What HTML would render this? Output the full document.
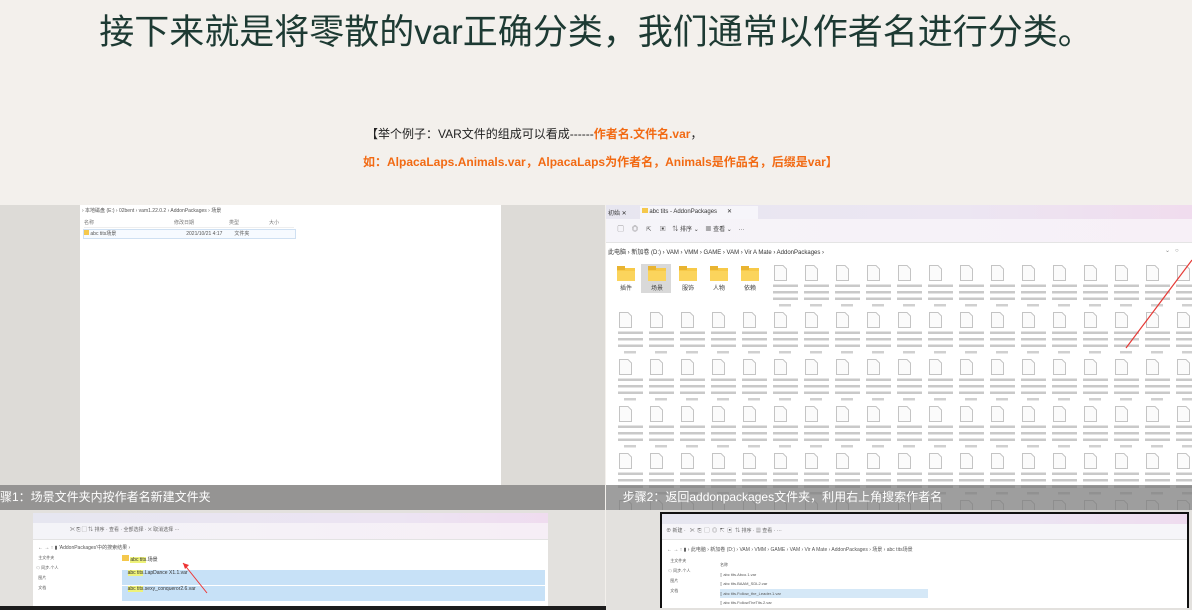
<!DOCTYPE html>
<html><head><meta charset="utf-8"><style>
html,body{margin:0;padding:0;}
body{width:1192px;height:610px;background:#f3f0ec;position:relative;overflow:hidden;font-family:"Liberation Sans","Noto Sans CJK SC",sans-serif;}
.abs{position:absolute;}
h1{position:absolute;left:0;width:1192px;top:4px;margin:0;text-align:center;font-weight:normal;font-size:35px;color:#1d3a33;font-family:"Liberation Sans","Noto Sans CJK SC",sans-serif;letter-spacing:0px;}
.l1{left:366px;top:125px;font-size:12px;color:#222;}
.l2{left:363px;top:153px;font-size:12px;color:#f26a13;font-weight:bold;}
.or{color:#f26a13;font-weight:bold;}
.cap{position:absolute;height:25px;background:rgba(120,120,120,.72);color:#fff;font-size:12px;line-height:25px;}
</style></head><body>
<h1>接下来就是将零散的var正确分类，我们通常以作者名进行分类。</h1>
<div class="abs l1">【举个例子：VAR文件的组成可以看成------<span class="or">作者名.文件名.var</span>，</div>
<div class="abs l2">如：AlpacaLaps.Animals.var，AlpacaLaps为作者名，Animals是作品名，后缀是var】</div>

<!-- left top panel -->
<div class="abs" style="left:0;top:205px;width:605px;height:305px;background:#dddbd7;"></div>
<div class="abs" style="left:80px;top:205px;width:421px;height:280px;background:#fff;"></div>
<div class="abs" style="left:82px;top:207px;font-size:5px;color:#555;">› 本地磁盘 (E:) › 02bent › vam1.22.0.2 › AddonPackages › 场景</div>
<div class="abs" style="left:84px;top:219px;width:210px;height:8px;border-bottom:1px solid #eee;font-size:5px;color:#777;">名称<span style="margin-left:80px">修改日期</span><span style="margin-left:35px">类型</span><span style="margin-left:30px">大小</span></div>
<div class="abs" style="left:83px;top:229px;width:211px;height:8px;border:1px solid #cfe0f2;background:#f6faff;font-size:5px;color:#555;"><span style="display:inline-block;width:5px;height:5px;background:#f5c84c;"></span> abc tits场景<span style="margin-left:70px">2021/10/21 4:17</span><span style="margin-left:12px">文件夹</span></div>
<div class="cap" style="left:0;top:485px;width:605px;">骤1：场景文件夹内按作者名新建文件夹</div>

<!-- left bottom -->
<div class="abs" style="left:0;top:510px;width:605px;height:100px;background:#e3e1de;"></div>
<div class="abs" style="left:33px;top:513px;width:515px;height:93px;background:#fff;"></div>
<div class="abs" style="left:33px;top:513px;width:515px;height:10px;background:linear-gradient(90deg,#e6e6f0,#ece4f2 70%,#efdcef);"></div>
<div class="abs" style="left:33px;top:523px;width:515px;height:16px;background:linear-gradient(90deg,#f4f4f8,#f6eef6);border-bottom:1px solid #e3e3e3;"></div>
<div class="abs" style="left:70px;top:526px;font-size:5px;color:#666;">✂ ⎘ ▢ ⇅ 排序 · 查看 · 全部选择 · ✕ 取消选择 ···</div>
<div class="abs" style="left:38px;top:544px;font-size:5px;color:#555;">← → ↑ ▮ 'AddonPackages'中的搜索结果 ›</div>
<div class="abs" style="left:36px;top:553px;width:45px;height:53px;font-size:4px;color:#555;line-height:10px;">&nbsp;&nbsp;主文件夹<br>☁ 同步-个人<br>&nbsp;&nbsp;图片<br>&nbsp;&nbsp;文档</div>
<div class="abs" style="left:122px;top:555px;width:423px;height:14px;font-size:5px;color:#333;"><span style="display:inline-block;width:7px;height:6px;background:#f5c84c;"></span> <span style="background:#eef27a">abc tits</span>.场景</div>
<div class="abs" style="left:122px;top:570px;width:423px;height:15px;background:#c7e1f7;font-size:5px;color:#333;">&nbsp;&nbsp;&nbsp;&nbsp;<span style="background:#eef27a">abc tits</span>.LapDance X1.1.var</div>
<div class="abs" style="left:122px;top:586px;width:423px;height:15px;background:#c7e1f7;font-size:5px;color:#333;">&nbsp;&nbsp;&nbsp;&nbsp;<span style="background:#eef27a">abc tits</span>.sexy_conqueror2.6.var</div>
<svg class="abs" style="left:180px;top:560px" width="30" height="35"><line x1="3" y1="3" x2="27" y2="33" stroke="#e33" stroke-width="1"/><path d="M3 3 L9 5 L5 9Z" fill="#e33"/></svg>
<div class="abs" style="left:0;top:606px;width:1192px;height:4px;background:#1c1c1c;"></div>

<!-- right top -->
<div class="abs" style="left:606px;top:205px;width:586px;height:305px;background:#fff;"></div>
<div class="abs" style="left:606px;top:205px;width:586px;height:14px;background:linear-gradient(90deg,#e7e6f0,#ece6f2 60%,#f0dcee);"></div>
<div class="abs" style="left:640px;top:206px;width:118px;height:13px;background:#f6f5fa;font-size:6px;line-height:13px;color:#333;">&nbsp;<span style="display:inline-block;width:6px;height:5px;background:#f5c84c"></span> abc tits - AddonPackages&nbsp;&nbsp;&nbsp;&nbsp;&nbsp;&nbsp;✕</div>
<div class="abs" style="left:608px;top:208px;font-size:6px;color:#333;">初始 ✕</div>
<div class="abs" style="left:606px;top:219px;width:586px;height:23px;background:linear-gradient(90deg,#f5f4f9,#f7f0f7);border-bottom:1px solid #e4e4e4;font-size:6px;line-height:23px;color:#444;">&nbsp;&nbsp;&nbsp;&nbsp;&nbsp;&nbsp;&nbsp;▢&nbsp;&nbsp;&nbsp;&nbsp;&nbsp;◎&nbsp;&nbsp;&nbsp;&nbsp;&nbsp;⇱&nbsp;&nbsp;&nbsp;&nbsp;&nbsp;▣&nbsp;&nbsp;&nbsp;&nbsp;⇅ 排序 ⌄&nbsp;&nbsp;&nbsp;&nbsp;▦ 查看 ⌄&nbsp;&nbsp;&nbsp;&nbsp;···</div>
<div class="abs" style="left:608px;top:247px;font-size:6px;color:#333;">此电脑 › 新加卷 (D:) › VAM › VMM › GAME › VAM › Vir A Mate › AddonPackages ›</div>
<div class="abs" style="left:1165px;top:247px;font-size:6px;color:#888;">⌄&nbsp;&nbsp;&nbsp;○</div>
<div class="abs" style="left:641px;top:264px;width:30px;height:29px;background:#d9d9d9;"></div>
<svg class="abs" style="left:606px;top:205px" width="586" height="305">
<defs>
<pattern id="fp" x="10" y="107" width="31" height="47" patternUnits="userSpaceOnUse">
<path d="M3.5 0.5 H12 L15.5 4 V15.5 H3.5Z" fill="#fbfbfb" stroke="#c4c4c4"/>
<rect x="2" y="19.5" width="25" height="2.5" fill="#777" opacity=".4"/>
<rect x="2" y="26" width="25" height="2.5" fill="#777" opacity=".4"/>
<rect x="2" y="32.5" width="25" height="2.5" fill="#777" opacity=".4"/>
<rect x="8" y="39" width="12" height="2.5" fill="#777" opacity=".35"/>
</pattern>
<g id="fold"><rect x="0" y="2" width="18" height="13" fill="#f7c948"/><rect x="0" y="0" width="8" height="4" fill="#e9b431"/><rect x="0" y="5" width="18" height="10" fill="#fbd45c"/></g>
</defs>
<use href="#fold" x="11" y="61"/><use href="#fold" x="42" y="61"/><use href="#fold" x="73" y="61"/><use href="#fold" x="104" y="61"/><use href="#fold" x="135" y="61"/>
<g font-size="6" fill="#444" font-family="Liberation Sans,Noto Sans CJK SC,sans-serif" text-anchor="middle"><text x="20" y="85">插件</text><text x="51" y="85">场景</text><text x="82" y="85">服饰</text><text x="113" y="85">人物</text><text x="144" y="85">依赖</text></g>
<rect x="165" y="60" width="421" height="47" fill="url(#fp)"/>
<rect x="10" y="107" width="576" height="198" fill="url(#fp)"/>
<line x1="586" y1="55" x2="520" y2="143" stroke="#e53935" stroke-width="1.2"/>
</svg>
<div class="cap" style="left:606px;top:485px;width:586px;">&nbsp;&nbsp;&nbsp;&nbsp;&nbsp;步骤2：返回addonpackages文件夹，利用右上角搜索作者名</div>

<!-- right bottom -->
<div class="abs" style="left:606px;top:510px;width:586px;height:100px;background:#e3e1de;"></div>
<div class="abs" style="left:660px;top:512px;width:525px;height:94px;background:#fff;border:1px solid #111;border-width:2px 2px 0 2px;"></div>
<div class="abs" style="left:662px;top:514px;width:525px;height:10px;background:linear-gradient(90deg,#e6e6f0,#ece4f2 70%,#efdcef);"></div>
<div class="abs" style="left:662px;top:524px;width:525px;height:15px;background:#f6f5f9;border-bottom:1px solid #e3e3e3;font-size:5px;line-height:15px;color:#666;">&nbsp;&nbsp;&nbsp;⊕ 新建 ·&nbsp;&nbsp;&nbsp;✂&nbsp;&nbsp;⎘&nbsp;&nbsp;▢&nbsp;&nbsp;◎&nbsp;&nbsp;⇱&nbsp;&nbsp;▣&nbsp;&nbsp;⇅ 排序 · ▦ 查看 · ···</div>
<div class="abs" style="left:667px;top:546px;font-size:5px;color:#555;">← → ↑ ▮ › 此电脑 › 新加卷 (D:) › VAM › VMM › GAME › VAM › Vir A Mate › AddonPackages › 场景 › abc tits场景</div>
<div class="abs" style="left:668px;top:556px;font-size:4px;color:#555;line-height:10px;">&nbsp;&nbsp;主文件夹<br>☁ 同步-个人<br>&nbsp;&nbsp;图片<br>&nbsp;&nbsp;文档</div>
<div class="abs" style="left:720px;top:560px;width:208px;font-size:4px;color:#555;line-height:9.6px;">
<div>名称</div>
<div>▯ abc tits.Abco.1.var</div>
<div>▯ abc tits.BAAM_SDL2.var</div>
<div style="background:#d5e8f7">▯ abc tits.Follow_the_Leader.1.var</div>
<div>▯ abc tits.FollowTheTits.2.var</div>
</div>
</body></html>
